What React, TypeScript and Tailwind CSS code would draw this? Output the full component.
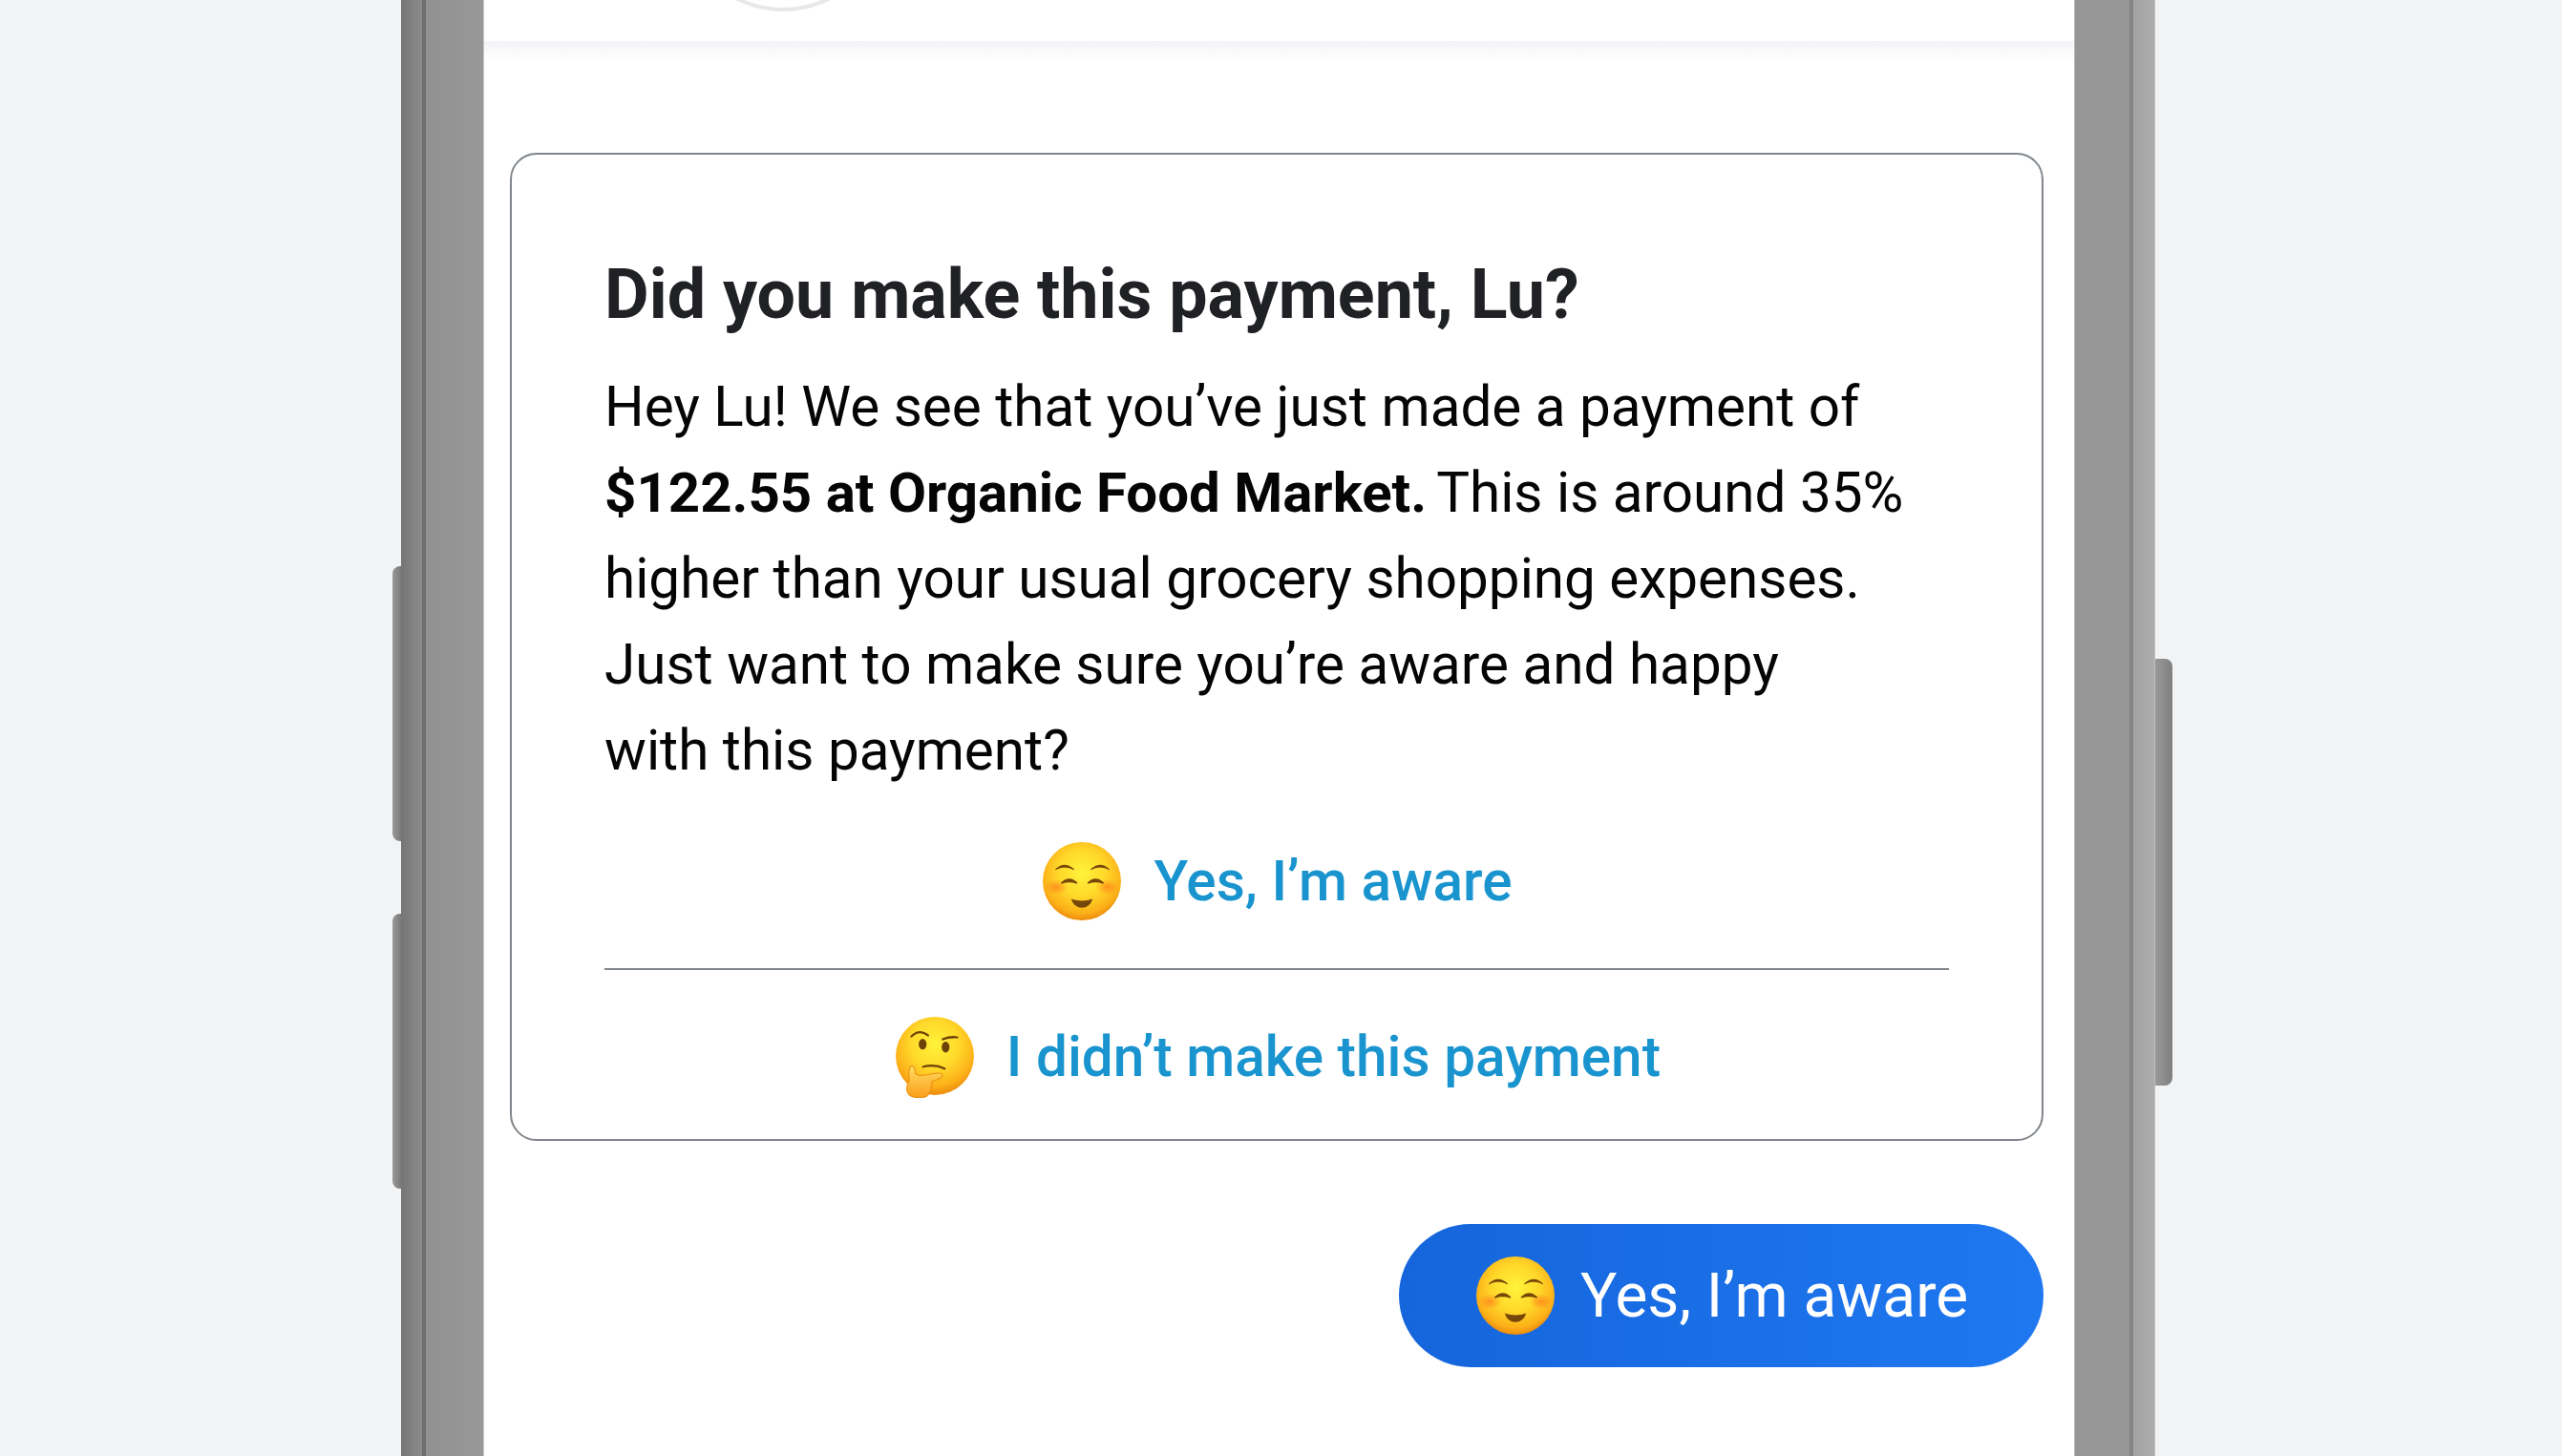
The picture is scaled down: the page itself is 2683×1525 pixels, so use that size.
const SmileEmoji = ({ id, className }: { id: string; className: string }) => (
	<svg viewBox="0 0 80 80" className={className}>
		<defs>
			<radialGradient id={`${id}-face`} cx="50%" cy="40%" r="60%">
				<stop offset="0%" stopColor="#fff33a" />
				<stop offset="50%" stopColor="#ffd82a" />
				<stop offset="85%" stopColor="#fcb018" />
				<stop offset="100%" stopColor="#ec8a0c" />
			</radialGradient>
			<radialGradient id={`${id}-blush`}>
				<stop offset="0%" stopColor="#ff7a1c" stopOpacity="0.7" />
				<stop offset="100%" stopColor="#ff7a1c" stopOpacity="0" />
			</radialGradient>
		</defs>
		<circle cx="40" cy="40" r="40" fill={`url(#${id}-face)`} />
		<ellipse cx="14" cy="46" rx="12" ry="8" fill={`url(#${id}-blush)`} />
		<ellipse cx="66" cy="46" rx="12" ry="8" fill={`url(#${id}-blush)`} />
		<g fill="#76470a">
			<path d="M13 28 Q22 19 32 28 Q22 23 13 28Z" stroke="#76470a" strokeWidth="0.8" />
			<path d="M49 28 Q59 19 68 28 Q59 23 49 28Z" stroke="#76470a" strokeWidth="0.8" />
			<path d="M19 42 Q27 34 35 42 Q27 39 19 42Z" stroke="#76470a" strokeWidth="1.4" />
			<path d="M46 42 Q54 34 62 42 Q54 39 46 42Z" stroke="#76470a" strokeWidth="1.4" />
			<path d="M29 58 Q40 62 51 58 Q48 67 40 67 Q32 67 29 58Z" />
		</g>
	</svg>
)

const ThinkingEmoji = ({ className }: { className: string }) => (
	<svg viewBox="0 0 81 83" className={className}>
		<defs>
			<radialGradient id="think-face" cx="50%" cy="36%" r="62%">
				<stop offset="0%" stopColor="#fff33a" />
				<stop offset="50%" stopColor="#ffd82a" />
				<stop offset="85%" stopColor="#fcb018" />
				<stop offset="100%" stopColor="#ef900e" />
			</radialGradient>
			<linearGradient id="think-hand" x1="0" y1="0" x2="0" y2="1">
				<stop offset="0%" stopColor="#ffdc62" />
				<stop offset="100%" stopColor="#fb9e1a" />
			</linearGradient>
		</defs>
		<circle cx="41" cy="40" r="40" fill="url(#think-face)" />
		<g fill="none" stroke="#6d4208" strokeWidth="2.2" strokeLinecap="round">
			<path d="M17 20 Q25 12 34 19" />
			<path d="M49 23 Q56 20 64 21" />
			<path d="M29 51 Q41 48 51 53" />
		</g>
		<ellipse cx="28.5" cy="28" rx="4" ry="5.5" fill="#6d4208" />
		<ellipse cx="52" cy="31" rx="4" ry="5.5" fill="#6d4208" />
		<path
			d="M17 50 C20 50 21 54 21 58 C24 61 28 60 35 59 C40 58 47 56 49 59 C50 62 44 64 38 66 C38 72 37 78 33 81 C27 84 17 83 14 79 C11 75 12 70 15 65 C14 60 14 52 17 50Z"
			fill="url(#think-hand)"
			stroke="#ea8f10"
			strokeWidth="1"
		/>
	</svg>
)

const Bezel = ({ side }: { side: "left" | "right" }) =>
	side === "left" ? (
		<div className="w-[87px] shrink-0 flex bg-[#959595] border-r border-[#c4c4c4]">
			<div className="w-[22px] bg-gradient-to-r from-[#757575] to-[#8c8c8c]" />
			<div className="w-[4px] bg-[#6e6e6e]" />
			<div className="flex-1 bg-gradient-to-r from-[#919191] to-[#989898]" />
		</div>
	) : (
		<div className="w-[85px] shrink-0 flex bg-[#959595] border-x border-[#bdbdbd]">
			<div className="flex-1 bg-[#969696]" />
			<div className="w-[4px] bg-[#858585]" />
			<div className="w-[22px] bg-gradient-to-r from-[#a2a2a2] to-[#adadad]" />
		</div>
	)

const App = () => {
	return (
		<div
			className="h-[1525px] overflow-hidden bg-[#f1f3f5] pl-[420px] pr-[426px]"
			style={{ fontFamily: "Roboto, sans-serif" }}
		>
			<div className="relative flex h-full">
				<div className="absolute left-[-9px] top-[593px] h-[288px] w-[9px] rounded-l-[8px] bg-gradient-to-r from-[#999999] to-[#7a7a7a]" />
				<div className="absolute left-[-9px] top-[957px] h-[288px] w-[9px] rounded-l-[8px] bg-gradient-to-r from-[#999999] to-[#7a7a7a]" />
				<div className="absolute right-[-18px] top-[690px] h-[447px] w-[18px] rounded-r-[8px] bg-gradient-to-r from-[#9a9a9a] to-[#7f7f7f]" />

				<Bezel side="left" />

				<div className="flex-1 bg-white flex flex-col">
					<div className="h-[43px] overflow-hidden flex justify-center pr-[1040px]">
						<div className="w-[220px] h-[220px] shrink-0 rounded-full border-4 border-[#e8e8e8] -mt-[208px]" />
					</div>
					<div className="h-[20px] bg-gradient-to-b from-[#f3f4f6] to-white" />

					<div className="pt-[97px] pl-[27px] pr-[32px]">
						<div className="h-[1035px] rounded-[28px] border-2 border-[#80868b] pl-[97px] pr-[97px] pt-[102px]">
							<h1 className="text-[71.8px] leading-[90px] font-bold text-[#202124]">
								Did you make this payment, Lu?
							</h1>
							<p className="mt-[27px] text-[58.4px] leading-[90px] text-[#050505]">
								Hey Lu! We see that you’ve just made a payment of
								<br />
								<span className="font-bold text-[58.2px]">$122.55 at Organic Food Market.</span>
								<span className="ml-[10px]">This is around 35%</span>
								<br />
								higher than your usual grocery shopping expenses.
								<br />
								Just want to make sure you’re aware and happy
								<br />
								with this payment?
							</p>
							<div className="h-[183px] pl-[2px] flex items-center justify-center gap-[34px] text-[58.5px] font-medium text-[#1a94cf]">
								<SmileEmoji id="smile-a" className="w-[82px] h-[82px]" />
								<span className="mt-[2px]">Yes, I’m aware</span>
							</div>
							<div className="h-[2px] bg-[#80868b]" />
							<div className="h-[183px] pl-[2px] flex items-center justify-center gap-[34px] text-[58.5px] font-medium text-[#1a94cf]">
								<ThinkingEmoji className="w-[83px] h-[85px]" />
								<span>I didn’t make this payment</span>
							</div>
						</div>

						<div className="flex justify-end mt-[87px]">
							<div className="h-[150px] w-[675px] rounded-[75px] bg-gradient-to-r from-[#1565dc] to-[#1f78f0] flex items-center pl-[81px] gap-[27px] text-[64px] text-white">
								<SmileEmoji id="smile-b" className="w-[82px] h-[82px]" />
								<span className="mt-[2px]">Yes, I’m aware</span>
							</div>
						</div>
					</div>
				</div>

				<Bezel side="right" />
			</div>
		</div>
	)
}

export default App
